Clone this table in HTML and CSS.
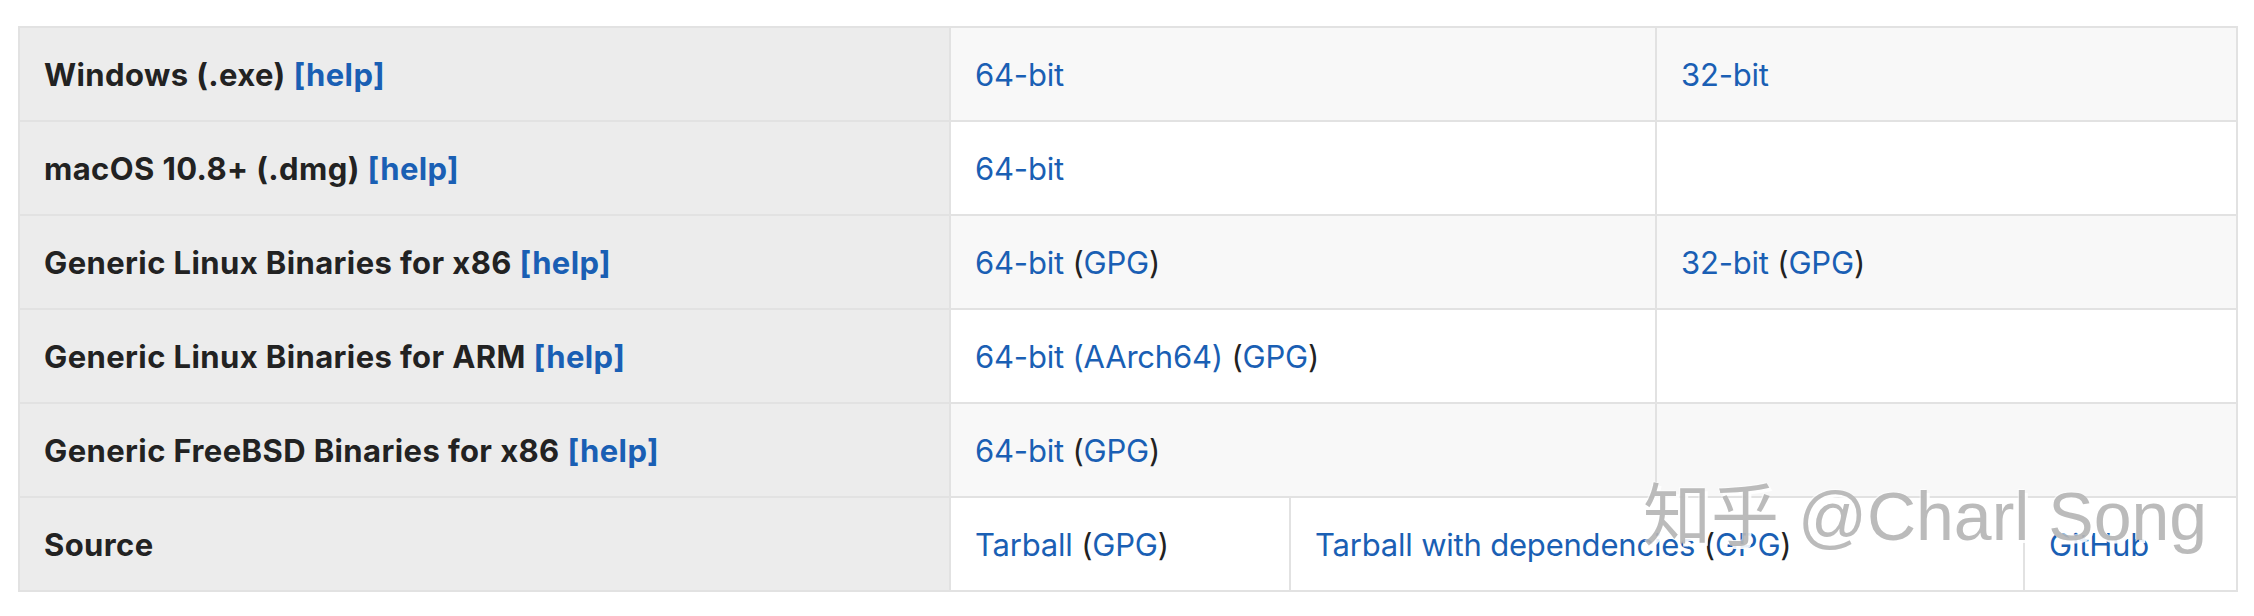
FILE: index.html
```html
<!DOCTYPE html>
<html>
<head>
<meta charset="utf-8">
<link rel="stylesheet" href="styles.css">
</head>
<body>
<div class="wrap">
<table class="dl">
  <colgroup>
    <col class="c0"><col class="c1"><col class="c2"><col class="c3"><col class="c4">
  </colgroup>
  <tr class="odd">
    <th>Windows (.exe) <a href="#">[help]</a></th>
    <td colspan="2"><a href="#">64-bit</a></td>
    <td colspan="2"><a href="#">32-bit</a></td>
  </tr>
  <tr class="even">
    <th>macOS 10.8+ (.dmg) <a href="#">[help]</a></th>
    <td colspan="2"><a href="#">64-bit</a></td>
    <td colspan="2"></td>
  </tr>
  <tr class="odd">
    <th>Generic Linux Binaries for x86 <a href="#">[help]</a></th>
    <td colspan="2"><a href="#">64-bit</a> (<a href="#">GPG</a>)</td>
    <td colspan="2"><a href="#">32-bit</a> (<a href="#">GPG</a>)</td>
  </tr>
  <tr class="even">
    <th>Generic Linux Binaries for ARM <a href="#">[help]</a></th>
    <td colspan="2"><a href="#">64-bit (AArch64)</a> (<a href="#">GPG</a>)</td>
    <td colspan="2"></td>
  </tr>
  <tr class="odd">
    <th>Generic FreeBSD Binaries for x86 <a href="#">[help]</a></th>
    <td colspan="2"><a href="#">64-bit</a> (<a href="#">GPG</a>)</td>
    <td colspan="2"></td>
  </tr>
  <tr class="even">
    <th>Source</th>
    <td><a href="#">Tarball</a> (<a href="#">GPG</a>)</td>
    <td colspan="2"><a href="#">Tarball with dependencies</a> (<a href="#">GPG</a>)</td>
    <td><a href="#">GitHub</a></td>
  </tr>
</table>
<div class="watermark">知乎 @Charl Song</div>
</div>
</body>
</html>
```
FILE: styles.css
```css
html, body {
  margin: 0;
  padding: 0;
  background: #ffffff;
}
body {
  font-family: "Inter", "Liberation Sans", sans-serif;
  color: #222222;
}
.wrap {
  position: relative;
  padding: 26px 0 0 18px;
}
.dl {
  border-collapse: collapse;
  table-layout: fixed;
  width: 2218px;
  font-size: 31px;
}
.c0 { width: 931px; }
.c1 { width: 340px; }
.c2 { width: 366px; }
.c3 { width: 368px; }
.c4 { width: 213px; }
.dl th, .dl td {
  height: 92px;
  padding: 0 0 0 24px;
  border: 2px solid #e2e2e2;
  text-align: left;
  vertical-align: middle;
  white-space: nowrap;
}
.dl th {
  background: #ececec;
  font-weight: 700;
  color: #222222;
  letter-spacing: 0.4px;
}
.dl td {
  font-weight: 400;
  color: #222222;
  letter-spacing: -0.2px;
}
.odd td { background: #f8f8f8; }
.even td { background: #ffffff; }
.dl a {
  color: #1a5fb4;
  text-decoration: none;
}
.watermark {
  position: absolute;
  left: 1643px;
  top: 482px;
  font-family: "Liberation Sans", "Noto Sans CJK SC", sans-serif;
  font-size: 68px;
  line-height: 1;
  color: rgba(170, 170, 170, 0.8);
  text-shadow: 3px 3px 0 rgba(255,255,255,0.9), -1px -1px 0 rgba(255,255,255,0.6);
  white-space: nowrap;
  pointer-events: none;
}
```
